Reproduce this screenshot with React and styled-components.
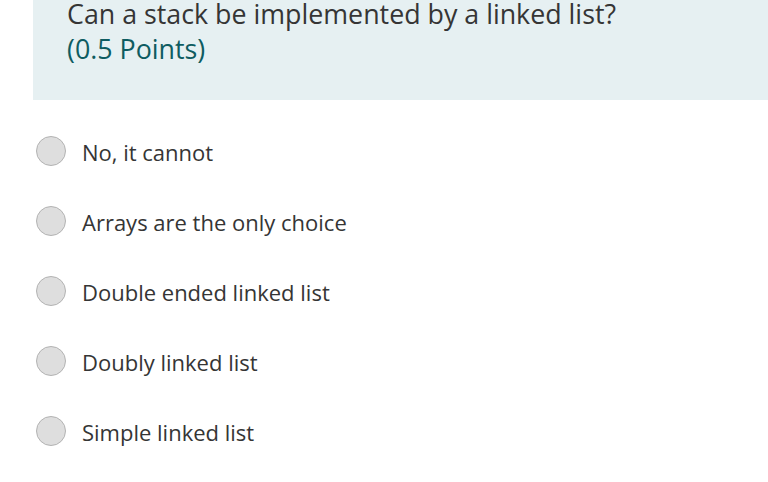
import React from "react";
import styled, { createGlobalStyle } from "styled-components";

const GlobalStyle = createGlobalStyle`
  body {
    margin: 0;
    background: #ffffff;
    font-family: "Open Sans", "Noto Sans", sans-serif;
  }
`;

const Page = styled.div`
  width: 768px;
  height: 482px;
  overflow: hidden;
  background: #ffffff;
`;

const QuestionBox = styled.div`
  margin-left: 33px;
  margin-top: -16px;
  height: 116px;
  padding: 12px 0 0 34px;
  box-sizing: border-box;
  background: #e6f0f2;
`;

const QuestionText = styled.div`
  font-size: 26.8px;
  line-height: 35px;
  color: #353535;
  white-space: nowrap;
`;

const Points = styled.div`
  font-size: 26.8px;
  line-height: 35px;
  color: #0e5c61;
`;

const Options = styled.div`
  display: flex;
  flex-direction: column;
  padding: 16px 0 0 36px;
`;

const Option = styled.label`
  display: flex;
  align-items: center;
  gap: 16px;
  height: 70px;
`;

const Radio = styled.span`
  width: 28px;
  height: 28px;
  border-radius: 50%;
  background: #dedede;
  border: 1px solid #b3b3b3;
  flex-shrink: 0;
`;

const OptionText = styled.span`
  font-size: 22px;
  color: #353535;
  padding-top: 2px;
`;

const choices = [
  "No, it cannot",
  "Arrays are the only choice",
  "Double ended linked list",
  "Doubly linked list",
  "Simple linked list",
];

export default function App() {
  return (
    <Page>
      <GlobalStyle />
      <QuestionBox>
        <QuestionText>Can a stack be implemented by a linked list?</QuestionText>
        <Points>(0.5 Points)</Points>
      </QuestionBox>
      <Options>
        {choices.map((c) => (
          <Option key={c}>
            <Radio />
            <OptionText>{c}</OptionText>
          </Option>
        ))}
      </Options>
    </Page>
  );
}
